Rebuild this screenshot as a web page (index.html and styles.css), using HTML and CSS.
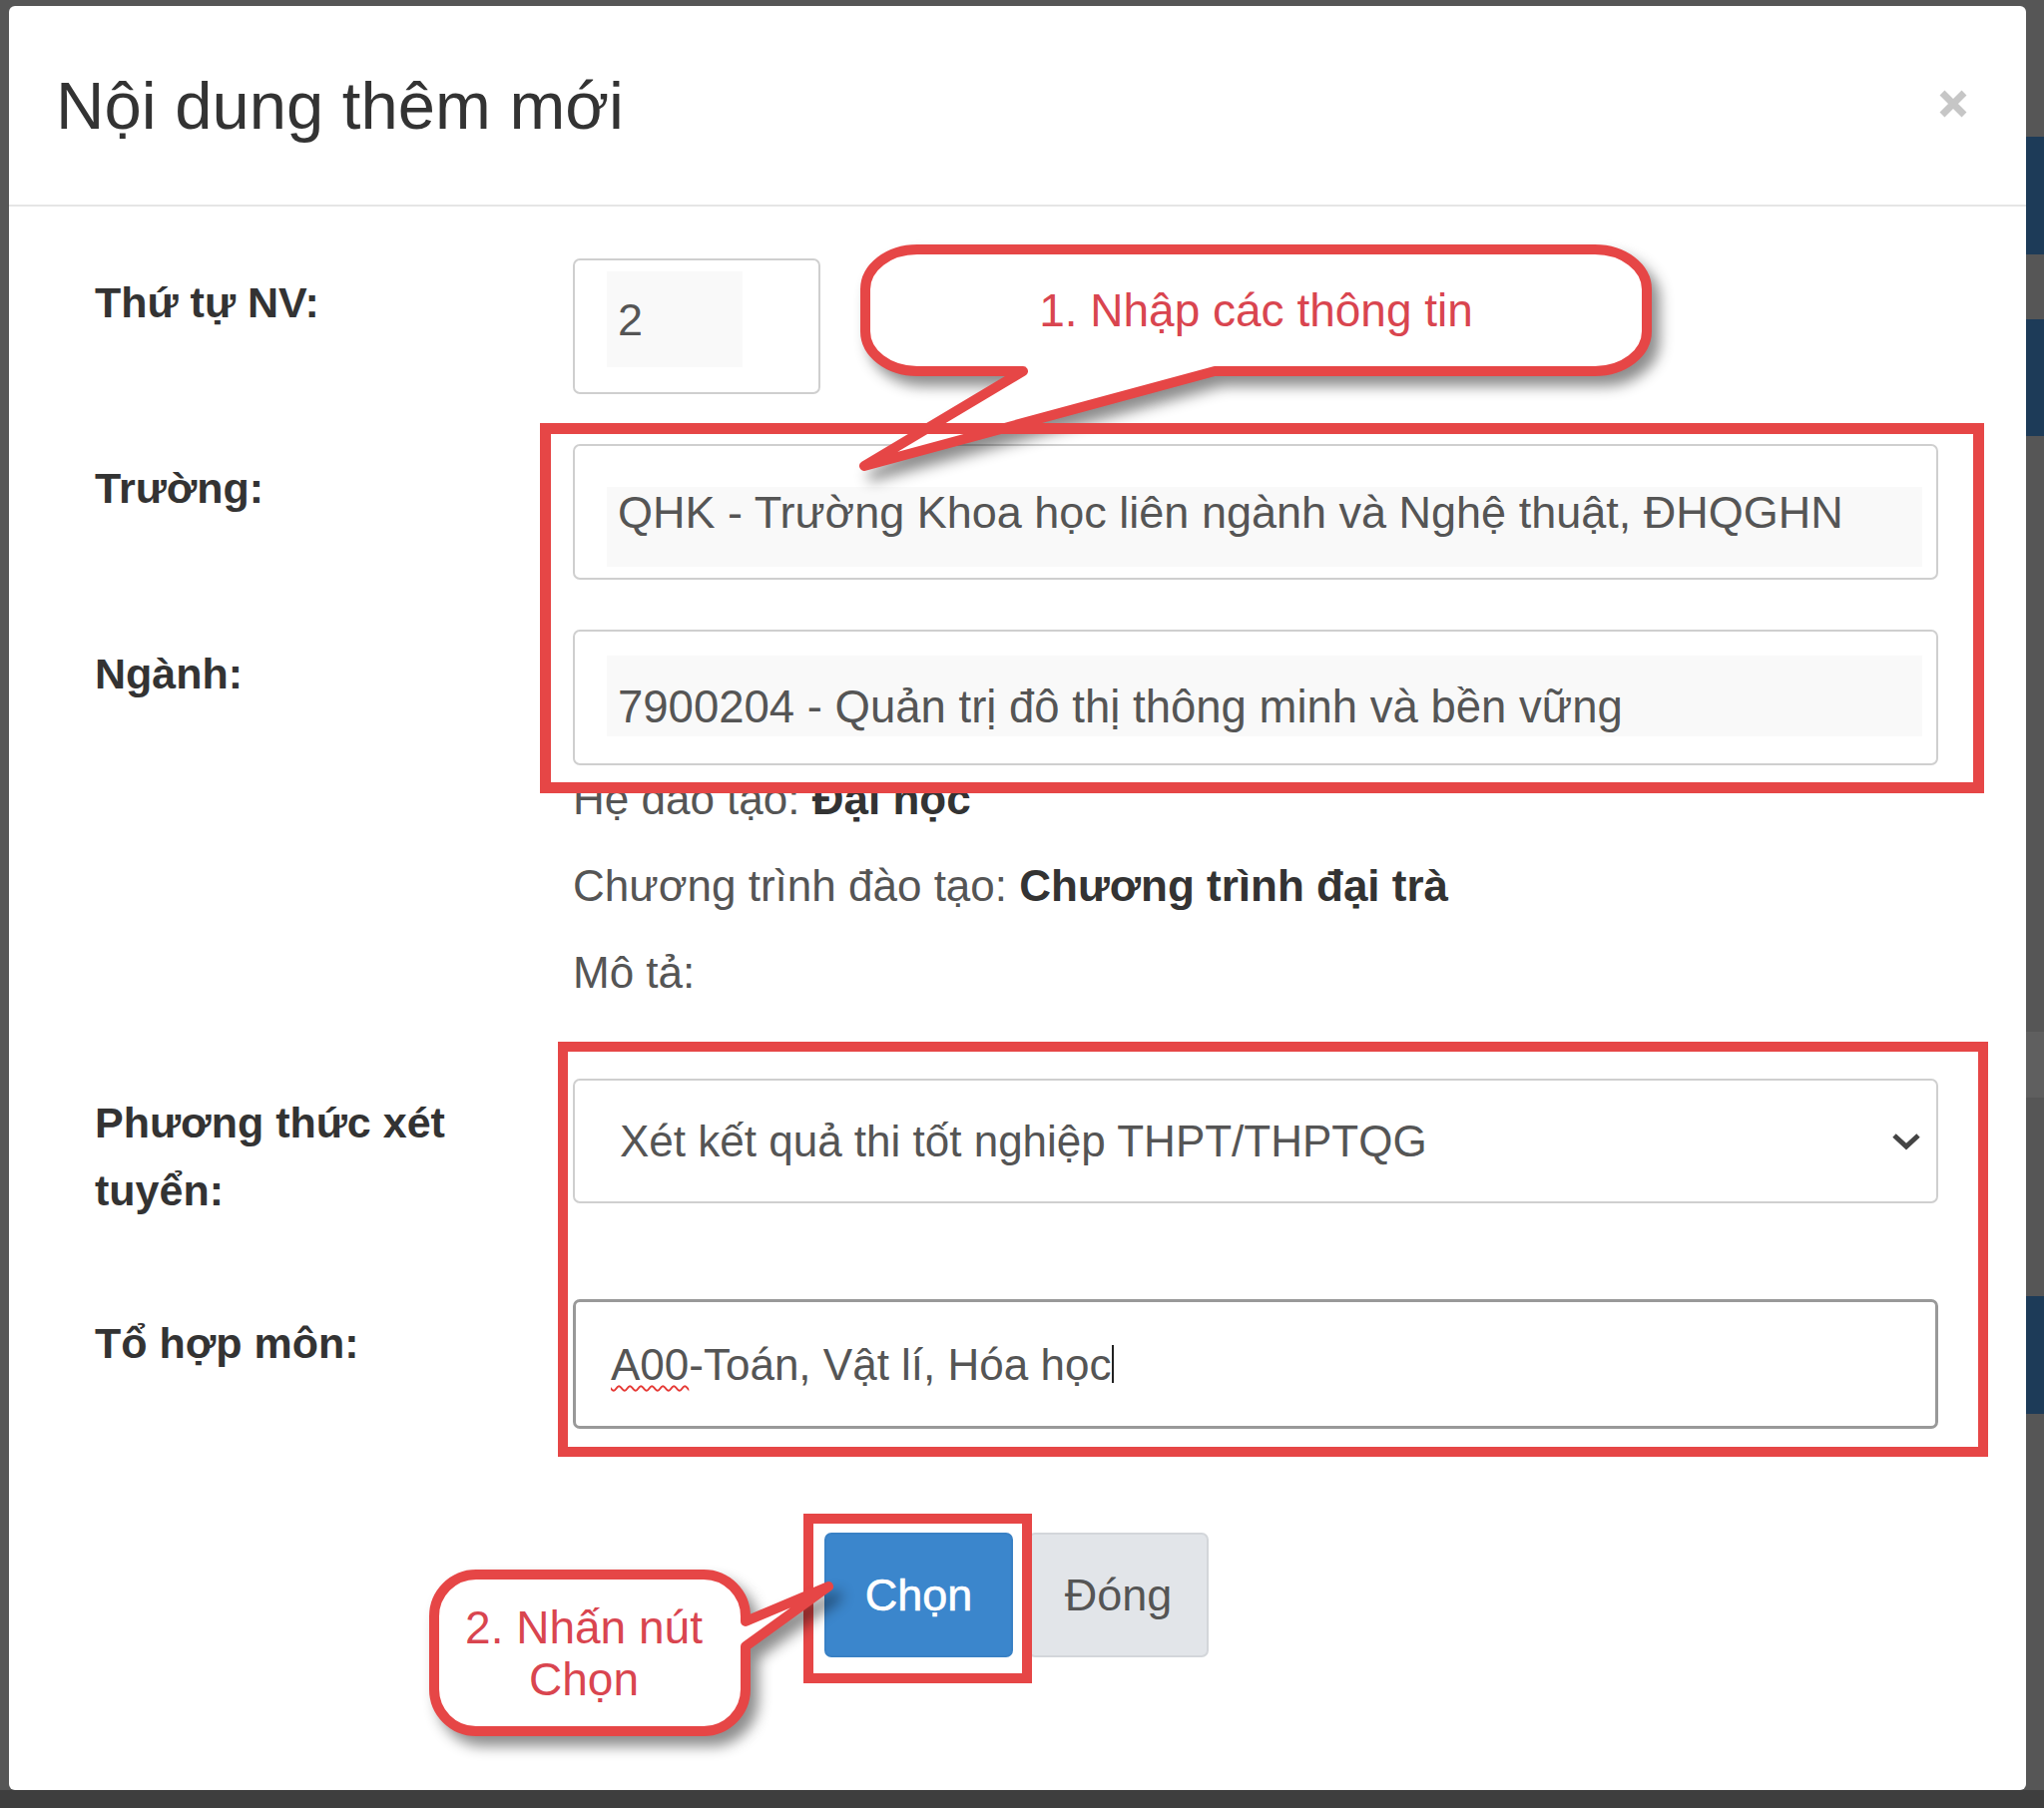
FILE: index.html
```html
<!DOCTYPE html>
<html lang="vi">
<head>
    <meta charset="UTF-8">
    <meta name="viewport" content="width=device-width, initial-scale=1.0">
    <title>Nội dung thêm mới</title>
    <link rel="stylesheet" href="styles.css">
</head>
<body>
<div class="screen">
    <!-- Modal -->
    <div class="modal">
        <div class="modal-header">
            <h4 class="modal-title">Nội dung thêm mới</h4>
            <button type="button" class="close" aria-label="Close">
                <svg width="30" height="30" viewBox="0 0 30 30"><path d="M4 4L26 26M26 4L4 26" stroke="#c6c6c6" stroke-width="7"/></svg>
            </button>
        </div>

        <div class="modal-body">
            <div class="form-group">
                <label class="control-label">Thứ tự NV:</label>
                <div class="field">
                    <div class="form-control form-control-short">
                        <span class="field-value value-order">2</span>
                    </div>
                </div>
            </div>

            <div class="form-group">
                <label class="control-label">Trường:</label>
                <div class="field">
                    <div class="form-control">
                        <span class="field-value value-school">QHK - Trường Khoa học liên ngành và Nghệ thuật, ĐHQGHN</span>
                    </div>
                </div>
            </div>

            <div class="form-group form-group-info">
                <label class="control-label">Ngành:</label>
                <div class="field">
                    <div class="form-control">
                        <span class="field-value value-major">7900204 - Quản trị đô thị thông minh và bền vững</span>
                    </div>
                    <p class="info">Hệ đào tạo: <b>Đại học</b></p>
                    <p class="info">Chương trình đào tạo: <b>Chương trình đại trà</b></p>
                    <p class="info">Mô tả:</p>
                </div>
            </div>

            <div class="form-group form-group-tall">
                <label class="control-label">Phương thức xét tuyển:</label>
                <div class="field">
                    <div class="form-control select">
                        <span>Xét kết quả thi tốt nghiệp THPT/THPTQG</span>
                        <svg width="30" height="18" viewBox="0 0 30 18"><path d="M3 3L15 14L27 3" fill="none" stroke="#444" stroke-width="5"/></svg>
                    </div>
                </div>
            </div>

            <div class="form-group form-group-last">
                <label class="control-label">Tổ hợp môn:</label>
                <div class="field">
                    <div class="form-control form-control-typed">
                        <span class="typed"><span class="misspelled">A00</span>-Toán, Vật lí, Hóa học<span class="caret"></span></span>
                    </div>
                </div>
            </div>

            <div class="modal-actions">
                <button type="button" class="btn btn-primary">Chọn</button>
                <button type="button" class="btn btn-default">Đóng</button>
            </div>
        </div>
    </div>

    <!-- Annotations -->
    <div class="callout callout-info">
        <svg class="callout-shape" width="793" height="132" viewBox="0 0 793 132">
            <path d="M57 5H736A52 40 0 0 1 788 45V87A52 40 0 0 1 736 127H355L4 222L163 127H57A52 40 0 0 1 5 87V45A52 40 0 0 1 57 5Z"/>
        </svg>
        <span class="callout-text">1. Nhập các thông tin</span>
    </div>
    <div class="mark mark-school"></div>
    <div class="mark mark-method"></div>
    <div class="mark mark-button"></div>
    <div class="callout callout-button">
        <svg class="callout-shape" width="322" height="167" viewBox="0 0 322 167">
            <path d="M47 5H275A42 42 0 0 1 317 47V52L400 17L317 77V120A42 42 0 0 1 275 162H47A42 42 0 0 1 5 120V47A42 42 0 0 1 47 5Z"/>
        </svg>
        <span class="callout-text">2. Nhấn nút<br>Chọn</span>
    </div>
</div>
</body>
</html>
```

FILE: styles.css
```css
/* General */
body {
    margin: 0;
    font-family: "Liberation Sans", Arial, sans-serif;
    background: #555;
}

/* Page behind the modal (dark overlay) */
.screen {
    position: relative;
    box-sizing: border-box;
    width: 2048px;
    height: 1812px;
    padding: 6px 0 0 9px;
    overflow: hidden;
    background:
        linear-gradient(#1d3b58, #1d3b58) 2030px 137px / 18px 118px no-repeat,
        linear-gradient(#1d3b58, #1d3b58) 2030px 320px / 18px 117px no-repeat,
        linear-gradient(#5f5f5f, #5f5f5f) 2030px 1034px / 18px 66px no-repeat,
        linear-gradient(#1d3b58, #1d3b58) 2030px 1299px / 18px 118px no-repeat,
        linear-gradient(#3e3e3e, #3e3e3e) 0 1794px / 100% 18px no-repeat,
        #565656;
}

/* Modal */
.modal {
    box-sizing: border-box;
    width: 2021px;
    height: 1788px;
    background: #fff;
    border-radius: 6px;
}

.modal-header {
    box-sizing: border-box;
    height: 201px;
    display: flex;
    align-items: center;
    justify-content: space-between;
    padding: 0 58px 0 47px;
    border-bottom: 2px solid #e5e5e5;
}

.modal-title {
    margin: 0;
    font-size: 67px;
    font-weight: normal;
    line-height: 1;
    color: #333;
}

.close {
    width: 30px;
    height: 30px;
    margin-top: -4px;
    padding: 0;
    border: 0;
    background: none;
}

.close svg {
    display: block;
}

.modal-body {
    padding: 52px 88px 0 86px;
}

/* Form rows */
.form-group {
    display: grid;
    grid-template-columns: 479px 1fr;
    align-items: start;
    margin-bottom: 50px;
}

.form-group-info {
    margin-bottom: 76px;
}

.form-group-tall {
    margin-bottom: 75px;
}

.form-group-last {
    margin-bottom: 0;
}

.control-label {
    padding: 10px 20px 0 0;
    font-size: 43px;
    font-weight: bold;
    line-height: 68px;
    color: #333;
}

.form-control {
    box-sizing: border-box;
    height: 136px;
    display: flex;
    align-items: flex-start;
    padding: 0 14px 0 32px;
    border: 2px solid #cfcfcf;
    border-radius: 7px;
    background: #fff;
    font-size: 45px;
    line-height: 50px;
    color: #555;
}

.form-control-short {
    width: 248px;
}

.field-value {
    box-sizing: border-box;
    flex: 1;
    padding-left: 11px;
    background: #f9f9f9;
    white-space: nowrap;
}

.value-order {
    flex: none;
    width: 136px;
    height: 96px;
    margin-top: 11px;
    padding-top: 24px;
}

.value-school {
    height: 80px;
    margin-top: 41px;
    padding-top: 1px;
}

.value-major {
    height: 81px;
    margin-top: 24px;
    padding-top: 27px;
    font-size: 45.5px;
}

/* Select */
.select {
    height: 125px;
    align-items: center;
    justify-content: space-between;
    padding: 0 15px 0 45px;
    font-size: 44px;
}

.select svg {
    display: block;
}

/* Focused input with typed text */
.form-control-typed {
    height: 130px;
    align-items: center;
    padding: 2px 14px 0 35px;
    border: 3px solid #999;
    font-size: 44px;
}

.misspelled {
    text-decoration: underline wavy #e53935;
    text-decoration-thickness: 2px;
    text-underline-offset: 5px;
}

.caret {
    display: inline-block;
    width: 2px;
    height: 38px;
    margin-left: 1px;
    vertical-align: -3px;
    background: #222;
}

/* Programme info */
.info {
    margin: 0 0 27px;
    font-size: 44px;
    line-height: 60px;
    color: #555;
}

.form-control + .info {
    margin-top: 4px;
}

.info:last-child {
    margin-bottom: 0;
}

.info b {
    color: #333;
}

/* Buttons */
.modal-actions {
    display: flex;
    justify-content: center;
    gap: 15px;
    margin-top: 104px;
}

.btn {
    box-sizing: border-box;
    height: 125px;
    padding: 0;
    border: 2px solid;
    border-radius: 7px;
    font-family: inherit;
    font-size: 45px;
    line-height: 121px;
    text-align: center;
}

.btn-primary {
    width: 189px;
    background: #3b86cc;
    border-color: #3981c5;
    color: #fff;
    -webkit-text-stroke: 0.6px #fff;
}

.btn-default {
    width: 181px;
    background: #e2e5e9;
    border-color: #d3d6da;
    color: #555;
}

/* Red annotation frames */
.mark {
    position: absolute;
    box-sizing: border-box;
    border: 11px solid #e64646;
}

.mark-school {
    left: 541px;
    top: 424px;
    width: 1447px;
    height: 371px;
    box-shadow: inset 0 -14px 0 #fff;
}

.mark-method {
    left: 559px;
    top: 1044px;
    width: 1433px;
    height: 416px;
    border-width: 10px;
}

.mark-button {
    left: 805px;
    top: 1517px;
    width: 229px;
    height: 170px;
    border-width: 10px;
}

/* Speech bubbles */
.callout {
    position: absolute;
    box-sizing: border-box;
    display: flex;
    align-items: center;
    justify-content: center;
    text-align: center;
    font-size: 46px;
    line-height: 52px;
    color: #d9454f;
}

.callout-shape {
    position: absolute;
    left: 0;
    top: 0;
    overflow: visible;
    filter: drop-shadow(8px 10px 7px rgba(0, 0, 0, 0.45));
}

.callout-shape path {
    fill: #fff;
    stroke: #e64646;
    stroke-width: 10;
    stroke-linejoin: round;
}

.callout-text {
    position: relative;
    white-space: nowrap;
}

.callout-info {
    left: 862px;
    top: 245px;
    width: 793px;
    height: 132px;
}

.callout-button {
    left: 430px;
    top: 1573px;
    width: 322px;
    height: 167px;
    padding-right: 12px;
}
```
